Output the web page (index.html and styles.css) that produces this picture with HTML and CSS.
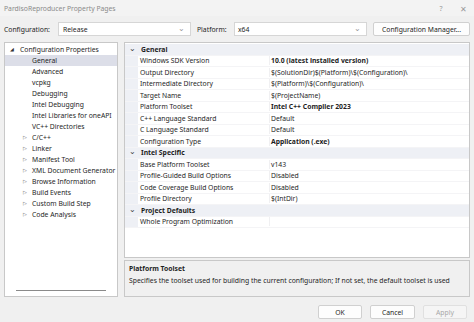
FILE: index.html
```html
<!DOCTYPE html>
<html lang="en">
<head>
    <meta charset="UTF-8">
    <title>PardisoReproducer Property Pages</title>
    <link rel="stylesheet" href="styles.css">
</head>
<body>
    <div class="titlebar">
        <span class="title">PardisoReproducer Property Pages</span>
        <span class="title-btn">?</span>
        <span class="title-btn close">✕</span>
    </div>

    <div class="config-row">
        <span class="label label-config">Configuration:</span>
        <div class="combo combo-config"><span>Release</span><span class="chev">⌄</span></div>
        <span class="label label-platform">Platform:</span>
        <div class="combo combo-platform"><span>x64</span><span class="chev">⌄</span></div>
        <button class="btn btn-manager">Configuration Manager...</button>
    </div>

    <div class="main">
        <div class="tree">
            <div class="tree-item root"><span class="arrow open">◢</span>Configuration Properties</div>
            <div class="tree-item leaf selected">General</div>
            <div class="tree-item leaf">Advanced</div>
            <div class="tree-item leaf">vcpkg</div>
            <div class="tree-item leaf">Debugging</div>
            <div class="tree-item leaf">Intel Debugging</div>
            <div class="tree-item leaf">Intel Libraries for oneAPI</div>
            <div class="tree-item leaf">VC++ Directories</div>
            <div class="tree-item group"><span class="arrow">▷</span>C/C++</div>
            <div class="tree-item group"><span class="arrow">▷</span>Linker</div>
            <div class="tree-item group"><span class="arrow">▷</span>Manifest Tool</div>
            <div class="tree-item group"><span class="arrow">▷</span>XML Document Generator</div>
            <div class="tree-item group"><span class="arrow">▷</span>Browse Information</div>
            <div class="tree-item group"><span class="arrow">▷</span>Build Events</div>
            <div class="tree-item group"><span class="arrow">▷</span>Custom Build Step</div>
            <div class="tree-item group"><span class="arrow">▷</span>Code Analysis</div>
            <div class="tree-fill"></div>
            <div class="hscroll"><div class="hscroll-thumb"></div></div>
        </div>

        <div class="right">
            <div class="grid">
                <div class="row cat"><span class="toggle">⌄</span><span class="name">General</span></div>
                <div class="row"><span class="name">Windows SDK Version</span><span class="value bold">10.0 (latest installed version)</span></div>
                <div class="row"><span class="name">Output Directory</span><span class="value">$(SolutionDir)$(Platform)\$(Configuration)\</span></div>
                <div class="row"><span class="name">Intermediate Directory</span><span class="value">$(Platform)\$(Configuration)\</span></div>
                <div class="row"><span class="name">Target Name</span><span class="value">$(ProjectName)</span></div>
                <div class="row"><span class="name">Platform Toolset</span><span class="value bold">Intel C++ Compiler 2023</span></div>
                <div class="row"><span class="name">C++ Language Standard</span><span class="value">Default</span></div>
                <div class="row"><span class="name">C Language Standard</span><span class="value">Default</span></div>
                <div class="row"><span class="name">Configuration Type</span><span class="value bold">Application (.exe)</span></div>
                <div class="row cat"><span class="toggle">⌄</span><span class="name">Intel Specific</span></div>
                <div class="row"><span class="name">Base Platform Toolset</span><span class="value">v143</span></div>
                <div class="row"><span class="name">Profile-Guided Build Options</span><span class="value">Disabled</span></div>
                <div class="row"><span class="name">Code Coverage Build Options</span><span class="value">Disabled</span></div>
                <div class="row"><span class="name">Profile Directory</span><span class="value">$(IntDir)</span></div>
                <div class="row cat"><span class="toggle">⌄</span><span class="name">Project Defaults</span></div>
                <div class="row"><span class="name">Whole Program Optimization</span><span class="value"></span></div>
                <div class="grid-fill"></div>
            </div>
            <div class="desc">
                <div class="desc-title">Platform Toolset</div>
                <div class="desc-text">Specifies the toolset used for building the current configuration; If not set, the default toolset is used</div>
            </div>
        </div>
    </div>

    <div class="footer">
        <button class="btn">OK</button>
        <button class="btn btn-cancel">Cancel</button>
        <button class="btn disabled">Apply</button>
    </div>
</body>
</html>
```

FILE: styles.css
```css
body {
    margin: 0;
    width: 474px;
    height: 322px;
    overflow: hidden;
    background: #f0f0f0;
    color: #1e1e1e;
    font-family: 'Noto Sans', 'Open Sans', sans-serif;
    font-size: 6.8px;
}

.titlebar {
    height: 16px;
    display: flex;
    align-items: center;
    padding: 0 4px 0 4px;
    background: #f3f3f3;
}

.title {
    flex: 1;
    color: #8a8a8a;
}

.title-btn {
    color: #9a9a9a;
    width: 30px;
    text-align: center;
    font-size: 7px;
}

.title-btn.close {
    width: 14px;
    font-size: 8px;
}

.config-row {
    margin-top: 6px;
    height: 14px;
    display: flex;
    align-items: center;
    padding: 0 4px;
}

.label {
    flex-shrink: 0;
}

.label-config {
    width: 54px;
}

.label-platform {
    width: 37px;
}

.combo {
    height: 14px;
    box-sizing: border-box;
    background: #fff;
    border: 1px solid #d6d6d6;
    display: flex;
    align-items: center;
    justify-content: space-between;
    padding: 0 5px 0 4px;
}

.combo-config {
    width: 133px;
    margin-right: 6px;
}

.combo-platform {
    width: 133px;
    margin-right: 6px;
    padding-left: 3px;
}

.chev {
    color: #999;
    font-size: 8px;
    line-height: 8px;
    margin-top: -3px;
}

.btn {
    height: 14px;
    box-sizing: border-box;
    background: #fdfdfd;
    border: 1px solid #d0d0d0;
    border-radius: 2px;
    font-family: inherit;
    font-size: 6.8px;
    color: #1e1e1e;
    padding: 0;
}

.btn-manager {
    width: 97px;
}

.main {
    margin-top: 6px;
    height: 255px;
    display: flex;
    gap: 6px;
    padding: 0 4px;
}

.tree {
    width: 114px;
    box-sizing: border-box;
    background: #fff;
    border: 1px solid #c8c8c8;
    display: flex;
    flex-direction: column;
    padding-top: 1px;
}

.tree-item {
    height: 11px;
    line-height: 11px;
    white-space: nowrap;
    display: flex;
    align-items: center;
}

.tree-item.root {
    padding-left: 5px;
}

.tree-item.leaf {
    padding-left: 27px;
}

.tree-item.group {
    padding-left: 18px;
}

.tree-item.selected {
    background: #dcdee8;
}

.arrow {
    width: 9px;
    font-size: 5px;
    color: #555;
}

.arrow.open {
    width: 10px;
    color: #333;
}

.tree-fill {
    flex: 1;
}

.hscroll {
    height: 11px;
    display: flex;
    align-items: center;
    padding: 0 11px;
}

.hscroll-thumb {
    flex: 1;
    height: 1px;
    background: #8a8a8a;
}

.right {
    flex: 1;
    display: flex;
    flex-direction: column;
    gap: 2px;
}

.grid {
    height: 216px;
    box-sizing: border-box;
    background: #fff;
    border: 1px solid #c8c8c8;
    display: flex;
    flex-direction: column;
    padding-top: 1px;
}

.row {
    height: 11.5px;
    display: flex;
    align-items: center;
    white-space: nowrap;
    border-bottom: 1px solid #f4f4f6;
    box-sizing: border-box;
    background: linear-gradient(to right, #eef0f5 0, #eef0f5 13px, #fff 13px);
}

.row .name {
    width: 129px;
    padding-left: 15px;
    border-right: 1px solid #f0f0f2;
    box-sizing: content-box;
}

.row.cat {
    background: #eef0f5;
    font-weight: bold;
}

.row.cat .name {
    padding-left: 0;
    border-right: none;
}

.toggle {
    width: 16px;
    padding-left: 4px;
    box-sizing: border-box;
    font-weight: normal;
    color: #444;
    font-size: 8px;
    line-height: 8px;
    margin-top: -3px;
}

.value {
    padding-left: 1px;
}

.bold {
    font-weight: bold;
}

.grid-fill {
    flex: 1;
}

.desc {
    flex: 1;
    box-sizing: border-box;
    border: 1px solid #c8c8c8;
    background: #f0f0f0;
    padding: 3px 4px;
    display: flex;
    flex-direction: column;
    gap: 3px;
}

.desc-title {
    font-weight: bold;
}

.footer {
    margin-top: 8px;
    display: flex;
    justify-content: flex-end;
    gap: 8px;
    padding-right: 7px;
}

.footer .btn {
    width: 44px;
}

.footer .btn-cancel {
    width: 45px;
}

.btn.disabled {
    color: #a8a8a8;
    background: #f5f5f5;
    border-color: #e0e0e0;
}
```
